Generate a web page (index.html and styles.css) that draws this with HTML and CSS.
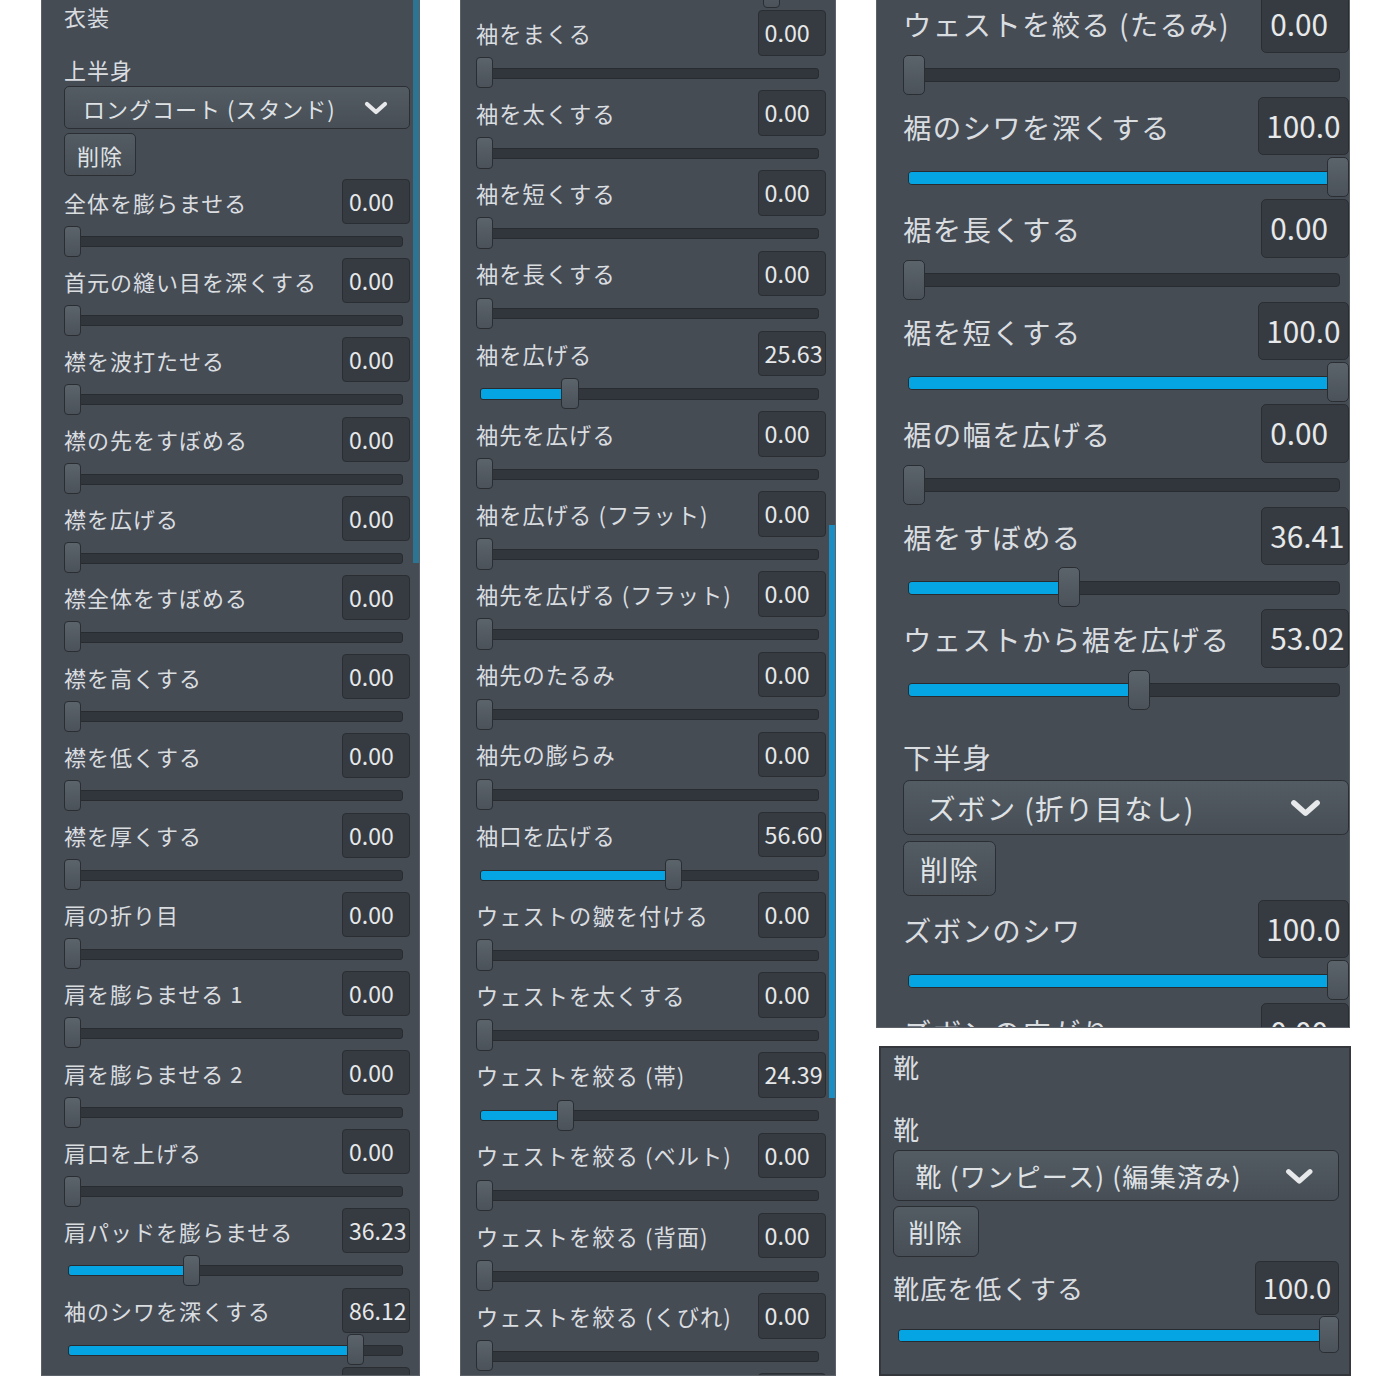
FILE: index.html
```html
<!DOCTYPE html>
<html lang="ja">
<head>
    <meta charset="UTF-8">
    <title>衣装</title>
    <link rel="stylesheet" href="styles.css">
</head>
<body>
<div class="board">

    <!-- 上半身 -->
    <div class="panel panel-a">
        <div class="panel-body">
            <div class="group-title">衣装</div>
            <div class="category">上半身</div>
            <div class="dropdown"><span>ロングコート (スタンド)</span><svg width="24" height="14" viewBox="0 0 24 14"><polyline points="3,3 12,11 21,3"/></svg></div>
            <div class="btn">削除</div>
            <div class="row"><div class="row-head"><span class="label">全体を膨らませる</span><span class="value">0.00</span></div><div class="slider" style="--v:0"><div class="track"><div class="fill"></div></div><div class="thumb"></div></div></div>
            <div class="row"><div class="row-head"><span class="label">首元の縫い目を深くする</span><span class="value">0.00</span></div><div class="slider" style="--v:0"><div class="track"><div class="fill"></div></div><div class="thumb"></div></div></div>
            <div class="row"><div class="row-head"><span class="label">襟を波打たせる</span><span class="value">0.00</span></div><div class="slider" style="--v:0"><div class="track"><div class="fill"></div></div><div class="thumb"></div></div></div>
            <div class="row"><div class="row-head"><span class="label">襟の先をすぼめる</span><span class="value">0.00</span></div><div class="slider" style="--v:0"><div class="track"><div class="fill"></div></div><div class="thumb"></div></div></div>
            <div class="row"><div class="row-head"><span class="label">襟を広げる</span><span class="value">0.00</span></div><div class="slider" style="--v:0"><div class="track"><div class="fill"></div></div><div class="thumb"></div></div></div>
            <div class="row"><div class="row-head"><span class="label">襟全体をすぼめる</span><span class="value">0.00</span></div><div class="slider" style="--v:0"><div class="track"><div class="fill"></div></div><div class="thumb"></div></div></div>
            <div class="row"><div class="row-head"><span class="label">襟を高くする</span><span class="value">0.00</span></div><div class="slider" style="--v:0"><div class="track"><div class="fill"></div></div><div class="thumb"></div></div></div>
            <div class="row"><div class="row-head"><span class="label">襟を低くする</span><span class="value">0.00</span></div><div class="slider" style="--v:0"><div class="track"><div class="fill"></div></div><div class="thumb"></div></div></div>
            <div class="row"><div class="row-head"><span class="label">襟を厚くする</span><span class="value">0.00</span></div><div class="slider" style="--v:0"><div class="track"><div class="fill"></div></div><div class="thumb"></div></div></div>
            <div class="row"><div class="row-head"><span class="label">肩の折り目</span><span class="value">0.00</span></div><div class="slider" style="--v:0"><div class="track"><div class="fill"></div></div><div class="thumb"></div></div></div>
            <div class="row"><div class="row-head"><span class="label">肩を膨らませる 1</span><span class="value">0.00</span></div><div class="slider" style="--v:0"><div class="track"><div class="fill"></div></div><div class="thumb"></div></div></div>
            <div class="row"><div class="row-head"><span class="label">肩を膨らませる 2</span><span class="value">0.00</span></div><div class="slider" style="--v:0"><div class="track"><div class="fill"></div></div><div class="thumb"></div></div></div>
            <div class="row"><div class="row-head"><span class="label">肩口を上げる</span><span class="value">0.00</span></div><div class="slider" style="--v:0"><div class="track"><div class="fill"></div></div><div class="thumb"></div></div></div>
            <div class="row"><div class="row-head"><span class="label">肩パッドを膨らませる</span><span class="value">36.23</span></div><div class="slider" style="--v:36.23"><div class="track"><div class="fill"></div></div><div class="thumb"></div></div></div>
            <div class="row"><div class="row-head"><span class="label">袖のシワを深くする</span><span class="value">86.12</span></div><div class="slider" style="--v:86.12"><div class="track"><div class="fill"></div></div><div class="thumb"></div></div></div>
            <div class="row"><div class="row-head"><span class="label">袖をまくる</span><span class="value">0.00</span></div><div class="slider" style="--v:0"><div class="track"><div class="fill"></div></div><div class="thumb"></div></div></div>
        </div>
        <div class="scrollbar"></div>
    </div>

    <!-- 袖・ウェスト -->
    <div class="panel panel-b">
        <div class="panel-body">
            <div class="row"><div class="row-head"><span class="label">袖のシワを深くする</span><span class="value">86.12</span></div><div class="slider" style="--v:86.12"><div class="track"><div class="fill"></div></div><div class="thumb"></div></div></div>
            <div class="row"><div class="row-head"><span class="label">袖をまくる</span><span class="value">0.00</span></div><div class="slider" style="--v:0"><div class="track"><div class="fill"></div></div><div class="thumb"></div></div></div>
            <div class="row"><div class="row-head"><span class="label">袖を太くする</span><span class="value">0.00</span></div><div class="slider" style="--v:0"><div class="track"><div class="fill"></div></div><div class="thumb"></div></div></div>
            <div class="row"><div class="row-head"><span class="label">袖を短くする</span><span class="value">0.00</span></div><div class="slider" style="--v:0"><div class="track"><div class="fill"></div></div><div class="thumb"></div></div></div>
            <div class="row"><div class="row-head"><span class="label">袖を長くする</span><span class="value">0.00</span></div><div class="slider" style="--v:0"><div class="track"><div class="fill"></div></div><div class="thumb"></div></div></div>
            <div class="row"><div class="row-head"><span class="label">袖を広げる</span><span class="value">25.63</span></div><div class="slider" style="--v:25.63"><div class="track"><div class="fill"></div></div><div class="thumb"></div></div></div>
            <div class="row"><div class="row-head"><span class="label">袖先を広げる</span><span class="value">0.00</span></div><div class="slider" style="--v:0"><div class="track"><div class="fill"></div></div><div class="thumb"></div></div></div>
            <div class="row"><div class="row-head"><span class="label">袖を広げる (フラット)</span><span class="value">0.00</span></div><div class="slider" style="--v:0"><div class="track"><div class="fill"></div></div><div class="thumb"></div></div></div>
            <div class="row"><div class="row-head"><span class="label">袖先を広げる (フラット)</span><span class="value">0.00</span></div><div class="slider" style="--v:0"><div class="track"><div class="fill"></div></div><div class="thumb"></div></div></div>
            <div class="row"><div class="row-head"><span class="label">袖先のたるみ</span><span class="value">0.00</span></div><div class="slider" style="--v:0"><div class="track"><div class="fill"></div></div><div class="thumb"></div></div></div>
            <div class="row"><div class="row-head"><span class="label">袖先の膨らみ</span><span class="value">0.00</span></div><div class="slider" style="--v:0"><div class="track"><div class="fill"></div></div><div class="thumb"></div></div></div>
            <div class="row"><div class="row-head"><span class="label">袖口を広げる</span><span class="value">56.60</span></div><div class="slider" style="--v:56.60"><div class="track"><div class="fill"></div></div><div class="thumb"></div></div></div>
            <div class="row"><div class="row-head"><span class="label">ウェストの皺を付ける</span><span class="value">0.00</span></div><div class="slider" style="--v:0"><div class="track"><div class="fill"></div></div><div class="thumb"></div></div></div>
            <div class="row"><div class="row-head"><span class="label">ウェストを太くする</span><span class="value">0.00</span></div><div class="slider" style="--v:0"><div class="track"><div class="fill"></div></div><div class="thumb"></div></div></div>
            <div class="row"><div class="row-head"><span class="label">ウェストを絞る (帯)</span><span class="value">24.39</span></div><div class="slider" style="--v:24.39"><div class="track"><div class="fill"></div></div><div class="thumb"></div></div></div>
            <div class="row"><div class="row-head"><span class="label">ウェストを絞る (ベルト)</span><span class="value">0.00</span></div><div class="slider" style="--v:0"><div class="track"><div class="fill"></div></div><div class="thumb"></div></div></div>
            <div class="row"><div class="row-head"><span class="label">ウェストを絞る (背面)</span><span class="value">0.00</span></div><div class="slider" style="--v:0"><div class="track"><div class="fill"></div></div><div class="thumb"></div></div></div>
            <div class="row"><div class="row-head"><span class="label">ウェストを絞る (くびれ)</span><span class="value">0.00</span></div><div class="slider" style="--v:0"><div class="track"><div class="fill"></div></div><div class="thumb"></div></div></div>
            <div class="row"><div class="row-head"><span class="label">ウェストを絞る (たるみ)</span><span class="value">0.00</span></div><div class="slider" style="--v:0"><div class="track"><div class="fill"></div></div><div class="thumb"></div></div></div>
        </div>
        <div class="scrollbar"></div>
    </div>

    <div class="side">
        <!-- 裾・下半身 -->
        <div class="panel panel-c">
            <div class="panel-body">
                <div class="row"><div class="row-head"><span class="label">ウェストを絞る (たるみ)</span><span class="value">0.00</span></div><div class="slider" style="--v:0"><div class="track"><div class="fill"></div></div><div class="thumb"></div></div></div>
                <div class="row"><div class="row-head"><span class="label">裾のシワを深くする</span><span class="value wide">100.0</span></div><div class="slider" style="--v:100"><div class="track"><div class="fill"></div></div><div class="thumb"></div></div></div>
                <div class="row"><div class="row-head"><span class="label">裾を長くする</span><span class="value">0.00</span></div><div class="slider" style="--v:0"><div class="track"><div class="fill"></div></div><div class="thumb"></div></div></div>
                <div class="row"><div class="row-head"><span class="label">裾を短くする</span><span class="value wide">100.0</span></div><div class="slider" style="--v:100"><div class="track"><div class="fill"></div></div><div class="thumb"></div></div></div>
                <div class="row"><div class="row-head"><span class="label">裾の幅を広げる</span><span class="value">0.00</span></div><div class="slider" style="--v:0"><div class="track"><div class="fill"></div></div><div class="thumb"></div></div></div>
                <div class="row"><div class="row-head"><span class="label">裾をすぼめる</span><span class="value">36.41</span></div><div class="slider" style="--v:36.41"><div class="track"><div class="fill"></div></div><div class="thumb"></div></div></div>
                <div class="row"><div class="row-head"><span class="label">ウェストから裾を広げる</span><span class="value">53.02</span></div><div class="slider" style="--v:53.02"><div class="track"><div class="fill"></div></div><div class="thumb"></div></div></div>
                <div class="category">下半身</div>
                <div class="dropdown"><span>ズボン (折り目なし)</span><svg width="24" height="14" viewBox="0 0 24 14"><polyline points="3,3 12,11 21,3"/></svg></div>
                <div class="btn">削除</div>
                <div class="row"><div class="row-head"><span class="label">ズボンのシワ</span><span class="value wide">100.0</span></div><div class="slider" style="--v:100"><div class="track"><div class="fill"></div></div><div class="thumb"></div></div></div>
                <div class="row"><div class="row-head"><span class="label">ズボンの広がり</span><span class="value">0.00</span></div><div class="slider" style="--v:0"><div class="track"><div class="fill"></div></div><div class="thumb"></div></div></div>
            </div>
        </div>

        <!-- 靴 -->
        <div class="panel panel-d">
            <div class="panel-body">
                <div class="group-title">靴</div>
                <div class="category">靴</div>
                <div class="dropdown"><span>靴 (ワンピース) (編集済み)</span><svg width="24" height="14" viewBox="0 0 24 14"><polyline points="3,3 12,11 21,3"/></svg></div>
                <div class="btn">削除</div>
                <div class="row"><div class="row-head"><span class="label">靴底を低くする</span><span class="value wide">100.0</span></div><div class="slider" style="--v:100"><div class="track"><div class="fill"></div></div><div class="thumb"></div></div></div>
            </div>
        </div>
    </div>

</div>
</body>
</html>
```

FILE: styles.css
```css
body {
    margin: 0;
    background: #fff;
    font-family: "Noto Sans CJK JP", "Noto Sans", sans-serif;
    color: #dadde0;
    overflow: hidden;
}

.board {
    display: flex;
    align-items: flex-start;
    gap: 40px;
    padding-left: 41px;
    height: 1376px;
}

/* Paineis */
.panel {
    position: relative;
    overflow: hidden;
    box-sizing: border-box;
    background: #454c54;
    border: 1px solid #5c6268;
    border-top: none;
}
.panel-a { width: 379px; height: 1376px; }
.panel-b { width: 376px; height: 1376px; }
.panel-c { width: 474px; height: 1028px; }
.panel-d {
    width: 472px;
    height: 330px;
    margin-left: 3px;
    border: 2px solid #34383d;
}

.side {
    display: flex;
    flex-direction: column;
    gap: 18px;
}

/* each screenshot was taken at a different scale */
.panel-body { width: 346px; }
.panel-a .panel-body { padding-left: 22px; }
.panel-b .panel-body {
    zoom: 1.0126;
    padding-left: 14.8px;
    margin-top: -69.3px;
}
.panel-c .panel-body {
    zoom: 1.294;
    width: 345px;
    padding-left: 20.1px;
    margin-top: -4.25px;
}
.panel-d .panel-body {
    zoom: 1.19;
    width: 375px;
    padding-left: 10px;
}

.scrollbar {
    position: absolute;
    right: 0;
    width: 6px;
}
.panel-a .scrollbar { top: 0; height: 563px; background: #2d7493; }
.panel-b .scrollbar { top: 525px; height: 573px; background: #1b8fc4; }

/* Titulos */
.group-title {
    height: 33.5px;
    line-height: 33.5px;
    font-size: 22px;
    letter-spacing: 1px;
}
.category {
    padding-top: 18px;
    line-height: 34.5px;
    font-size: 22px;
    letter-spacing: 1px;
}

/* Dropdown e botao */
.dropdown, .btn {
    box-sizing: border-box;
    height: 43px;
    border: 1px solid #2b2f34;
    border-radius: 5px;
    background: linear-gradient(#535b63, #474e56);
    font-size: 22px;
    letter-spacing: 1px;
    color: #dfe2e5;
}
.dropdown {
    display: flex;
    align-items: center;
    justify-content: space-between;
    padding: 0 21px 0 18px;
    white-space: nowrap;
}
.dropdown svg polyline {
    fill: none;
    stroke: #e6e8ea;
    stroke-width: 4.2;
    stroke-linecap: round;
    stroke-linejoin: round;
}
.btn {
    width: 72px;
    margin: 4px 0 3px;
    display: flex;
    align-items: center;
    justify-content: center;
}

/* Linhas com slider */
.row { height: 79.2px; }

.row-head {
    height: 45px;
    display: flex;
    align-items: center;
    justify-content: space-between;
}
.label {
    font-size: 22px;
    letter-spacing: 1px;
    white-space: nowrap;
}
.value {
    box-sizing: border-box;
    width: 68px;
    height: 45px;
    padding-left: 6px;
    background: #363b41;
    border: 1px solid #2a2e33;
    border-radius: 4px;
    font-size: 23px;
    line-height: 43px;
    color: #e6e8ea;
    overflow: hidden;
    white-space: nowrap;
}
.value.wide { width: 71px; }

.slider {
    position: relative;
    box-sizing: border-box;
    height: 34.2px;
    padding: 12px 7px 0 4px;
}
.track {
    box-sizing: border-box;
    height: 11px;
    border: 1px solid #282c31;
    border-radius: 3px;
    background: #31363c;
    overflow: hidden;
}
.fill {
    height: 100%;
    width: calc((100% - 4px) * var(--v) / 100 + 4.5px);
    background: #05a4e3;
}
.thumb {
    position: absolute;
    top: 1.5px;
    left: calc((100% - 17px) * var(--v) / 100);
    box-sizing: border-box;
    width: 17px;
    height: 31px;
    border: 1px solid #2a2e33;
    border-radius: 4px;
    background: linear-gradient(#5b636b, #4b5259);
}
```
